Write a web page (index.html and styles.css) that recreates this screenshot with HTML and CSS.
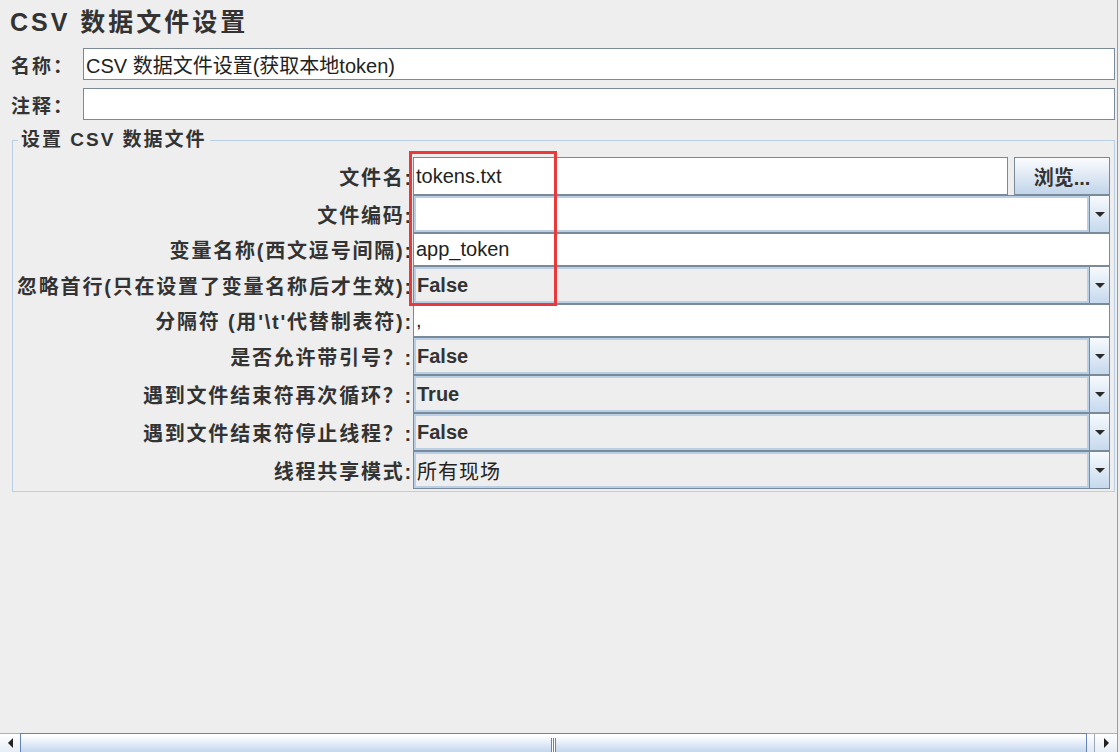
FILE: index.html
```html
<!DOCTYPE html>
<html lang="zh-CN">
<head>
  <meta charset="UTF-8">
  <title>CSV 数据文件设置</title>
  <link rel="stylesheet" href="styles.css">
</head>
<body>
  <div class="window">
    <div class="panel">
      <h1 class="title">CSV 数据文件设置</h1>
      <div class="meta">
        <span class="meta-label">名称：</span>
        <div class="field">CSV 数据文件设置(获取本地token)</div>
        <span class="meta-label">注释：</span>
        <div class="field"></div>
      </div>
      <fieldset class="group">
        <legend>设置 CSV 数据文件</legend>
        <div class="row tall">
          <span class="label">文件名:</span>
          <div class="control file-cell">
            <div class="field">tokens.txt</div>
            <button class="browse">浏览...</button>
          </div>
        </div>
        <div class="row tall">
          <span class="label">文件编码:</span>
          <div class="control combo editable">
            <div class="combo-value"></div>
            <div class="combo-arrow"></div>
          </div>
        </div>
        <div class="row short">
          <span class="label">变量名称(西文逗号间隔):</span>
          <div class="control field">app_token</div>
        </div>
        <div class="row tall">
          <span class="label">忽略首行(只在设置了变量名称后才生效):</span>
          <div class="control combo">
            <div class="combo-value bold">False</div>
            <div class="combo-arrow"></div>
          </div>
        </div>
        <div class="row short">
          <span class="label">分隔符 (用'\t'代替制表符):</span>
          <div class="control field">,</div>
        </div>
        <div class="row tall">
          <span class="label">是否允许带引号？:</span>
          <div class="control combo">
            <div class="combo-value bold">False</div>
            <div class="combo-arrow"></div>
          </div>
        </div>
        <div class="row tall">
          <span class="label">遇到文件结束符再次循环？:</span>
          <div class="control combo">
            <div class="combo-value bold">True</div>
            <div class="combo-arrow"></div>
          </div>
        </div>
        <div class="row tall">
          <span class="label">遇到文件结束符停止线程？:</span>
          <div class="control combo">
            <div class="combo-value bold">False</div>
            <div class="combo-arrow"></div>
          </div>
        </div>
        <div class="row tall">
          <span class="label">线程共享模式:</span>
          <div class="control combo">
            <div class="combo-value cjk">所有现场</div>
            <div class="combo-arrow"></div>
          </div>
        </div>
      </fieldset>
      <div class="annotation"></div>
    </div>
    <div class="hscroll">
      <div class="sb-btn sb-left"></div>
      <div class="sb-track">
        <div class="sb-thumb"><span class="grip"></span></div>
      </div>
      <div class="sb-btn sb-right"></div>
    </div>
  </div>
</body>
</html>
```

FILE: styles.css
```css
body {
  margin: 0;
  background: #eeeeee;
  color: #333;
  font-family: "Liberation Sans", "Noto Sans CJK SC", sans-serif;
}
.window {
  width: 1118px;
  height: 752px;
  box-sizing: border-box;
  border-right: 1px solid #9c9c9c;
  display: flex;
  flex-direction: column;
  overflow: hidden;
}
.panel {
  flex: 1;
  position: relative;
}
.title {
  margin: 0;
  height: 48px;
  box-sizing: border-box;
  padding: 8px 0 0 10px;
  font-size: 25px;
  line-height: 28px;
  font-weight: bold;
  letter-spacing: 3px;
  color: #333;
}
.meta {
  display: grid;
  grid-template-columns: 73px 1032px;
  grid-auto-rows: 32px;
  row-gap: 8px;
  padding-left: 10px;
}
.meta-label {
  align-self: center;
  padding-left: 1px;
  font-size: 19px;
  font-weight: bold;
  letter-spacing: 2px;
}
.field {
  box-sizing: border-box;
  border: 1px solid #7a8a99;
  background: #fff;
  padding: 0 2px;
  display: flex;
  align-items: center;
  font-size: 20px;
  color: #222;
  white-space: nowrap;
}
.group {
  margin: 10px 2px 0 12px;
  padding: 7px 4px 2px 0;
  border: 1px solid #b8cfe5;
  min-width: 0;
}
.group legend {
  margin-left: 5px;
  padding: 0 3px;
  font-size: 19px;
  line-height: 20px;
  font-weight: bold;
  letter-spacing: 2px;
}
.row {
  display: flex;
  align-items: stretch;
}
.row.tall {
  height: 38px;
}
.row.short {
  height: 33px;
}
.label {
  width: 400px;
  flex: none;
  text-align: right;
  align-self: center;
  font-size: 20px;
  font-weight: bold;
  letter-spacing: 1.8px;
  white-space: nowrap;
}
.control {
  flex: 1;
}
.file-cell {
  display: flex;
}
.file-cell .field {
  flex: 1;
}
.browse {
  width: 96px;
  margin-left: 6px;
  box-sizing: border-box;
  border: 1px solid #7a8a99;
  background: linear-gradient(#fbfcfe, #c2d5ea);
  font-family: "Liberation Sans", "Noto Sans CJK SC", sans-serif;
  font-size: 20px;
  font-weight: bold;
  color: #333;
  padding: 0;
}
.combo {
  display: flex;
  box-sizing: border-box;
  border: 1px solid #7a8a99;
}
.combo-value {
  flex: 1;
  background: #eeeeee;
  box-shadow: inset 0 0 0 2px #b8cfe5;
  padding-left: 3px;
  display: flex;
  align-items: center;
  font-size: 20px;
  color: #222;
}
.combo.editable .combo-value {
  background: #fff;
}
.combo-value.bold {
  font-weight: bold;
  color: #333;
}
.combo-value.cjk {
  letter-spacing: 1px;
}
.combo-arrow {
  width: 19px;
  border-left: 1px solid #7a8a99;
  background: linear-gradient(#f7fafd, #c6d9ee);
  display: flex;
  align-items: center;
  justify-content: center;
}
.combo-arrow::after {
  content: "";
  border-left: 5px solid transparent;
  border-right: 5px solid transparent;
  border-top: 5px solid #2a2a2a;
}
.annotation {
  position: absolute;
  left: 409px;
  top: 151px;
  width: 148px;
  height: 155px;
  box-sizing: border-box;
  border: 3px solid #e8393b;
}
.hscroll {
  height: 19px;
  flex: none;
  display: flex;
  border-top: 1px solid #a3b2c4;
  box-sizing: border-box;
}
.sb-btn {
  width: 20px;
  flex: none;
  background: linear-gradient(#ffffff, #e6edf5);
  display: flex;
  align-items: center;
  justify-content: center;
}
.sb-left::after {
  content: "";
  border-top: 5px solid transparent;
  border-bottom: 5px solid transparent;
  border-right: 5px solid #222;
}
.sb-right {
  width: 22px;
  border-left: 1px solid #9aa8b8;
}
.sb-right::after {
  content: "";
  border-top: 5px solid transparent;
  border-bottom: 5px solid transparent;
  border-left: 5px solid #222;
}
.sb-track {
  flex: 1;
  display: flex;
  background: linear-gradient(#ffffff, #dfe8f3);
}
.sb-thumb {
  width: 1067px;
  box-sizing: border-box;
  border: 1px solid #6382bf;
  border-bottom: none;
  margin-top: -1px;
  background: linear-gradient(#ffffff 10%, #c4d7ee);
  display: flex;
  justify-content: center;
  padding-top: 4px;
}
.grip {
  width: 5px;
  height: 14px;
  background: repeating-linear-gradient(90deg, #6382bf 0 1px, #ffffff 1px 2px);
}
```
